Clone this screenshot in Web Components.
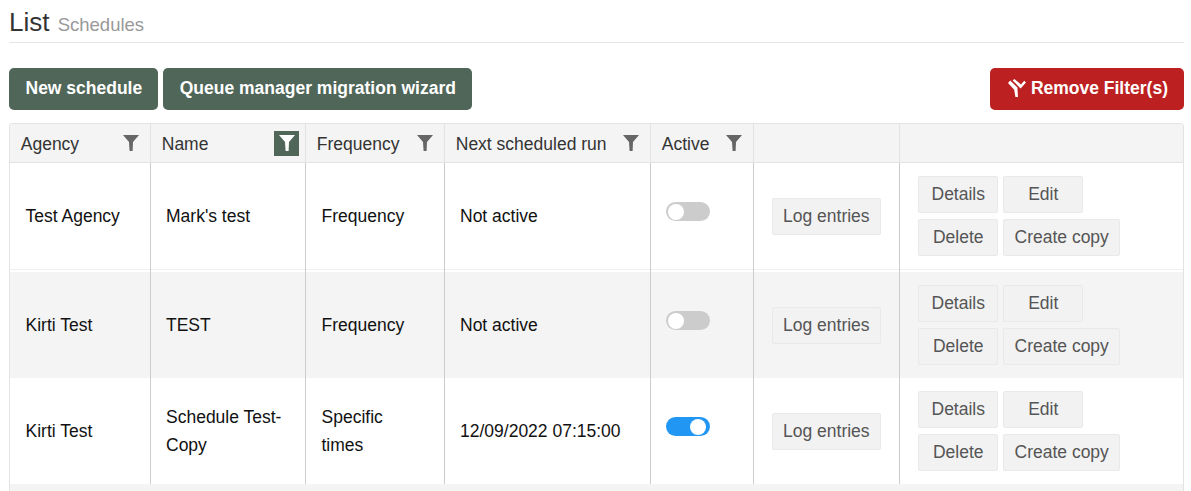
<!DOCTYPE html>
<html>
<head>
<meta charset="utf-8">
<title>Schedules</title>
<style>
  html, body { margin: 0; height: 491px; overflow: hidden; background: #fff; }
  body { font-family: "Liberation Sans", Arial, sans-serif; font-size: 16px; color: #333; }
</style>
</head>
<body>
<schedule-page></schedule-page>

<script>
const FILTER_PATH = 'M0 0H16L10 7 9.6 16H6.6L6 7Z';

class PageHeader extends HTMLElement {
  connectedCallback() {
    this.attachShadow({ mode: 'open' });
    this.shadowRoot.innerHTML = `
      <style>
        :host { display: block; border-bottom: 1px solid #e5e5e5; height: 42px; box-sizing: content-box; }
        .title { font-size: 26px; line-height: 44px; color: #333; }
        small { font-size: 18.5px; color: #999; margin-left: 1px; }
      </style>
      <div class="title"><slot></slot> <small><slot name="sub"></slot></small></div>
    `;
  }
}

class UiButton extends HTMLElement {
  connectedCallback() {
    this.attachShadow({ mode: 'open' });
    this.shadowRoot.innerHTML = `
      <style>
        :host { display: inline-flex; align-items: center; justify-content: center; box-sizing: border-box;
          height: 37px; padding: 0 10px 1px 10.5px; background: #f2f2f2; border: 1px solid #e9e9e9; border-radius: 2px;
          color: #555; font-size: 17.5px; white-space: nowrap; }
        :host([kind="primary"]), :host([kind="danger"]) { height: 42px; padding: 0 16px 2px 16.5px; border: 0; border-radius: 5px;
          color: #fff; font-weight: bold; }
        :host([kind="primary"]) { background: #4f6659; }
        :host([kind="danger"]) { background: #bd2020; padding-left: 18px; }
      </style>
      <slot></slot>
    `;
  }
}

class FilterIcon extends HTMLElement {
  connectedCallback() {
    this.attachShadow({ mode: 'open' });
    this.shadowRoot.innerHTML = `
      <style>
        :host { display: flex; align-items: center; justify-content: center; box-sizing: border-box; width: 25px; height: 25px; color: #666; padding-right: 1px; }
        :host([on]) { background: #4f6659; color: #fff; padding-right: 0; }
        svg { width: 16px; height: 16px; fill: currentColor; display: block; }
      </style>
      <svg viewBox="0 0 16 16"><path d="${FILTER_PATH}"/></svg>
    `;
  }
}

class UiToggle extends HTMLElement {
  connectedCallback() {
    this.attachShadow({ mode: 'open' });
    this.shadowRoot.innerHTML = `
      <style>
        :host { display: block; position: relative; width: 44px; height: 19px; border-radius: 10px; background: #ccc; }
        :host([on]) { background: #2196f3; }
        i { position: absolute; left: 2px; top: 1.5px; width: 16px; height: 16px; border-radius: 50%; background: #fff; }
        :host([on]) i { left: 24px; }
      </style>
      <i></i>
    `;
  }
}

class ScheduleRow extends HTMLElement {
  connectedCallback() {
    const on = this.hasAttribute('active');
    this.attachShadow({ mode: 'open' });
    this.shadowRoot.innerHTML = `
      <style>
        :host { display: grid; grid-template-columns: 141px 155px 139px 206px 103px 146px 1fr; height: 106px;
          color: #111; font-size: 17.5px; line-height: 28px; box-sizing: border-box; }
        :host([alt]) { background: #f4f4f4; }
        .c { display: flex; align-items: center; padding-left: 15px; padding-bottom: var(--pb, 0px); border-right: 1px solid #ccc; box-sizing: border-box; }
        .c:last-child { border-right: 0; }
        .l { padding-left: 15.5px; padding-right: 20px; }
        .n { padding-right: 10px; }
        .t { padding-bottom: calc(var(--pb, 0px) + 9px); }
        .g { padding-left: 18px; }
        .g ui-button { padding-left: 10px; }
        .acts { display: grid; grid-template-columns: 80px auto; justify-content: start; gap: 6px 5px; padding-left: 18px; align-content: center; }
        .acts ui-button { justify-self: stretch; }
        .acts .w { min-width: 80px; justify-self: start; }
      </style>
      <div class="c l"><slot name="agency"></slot></div>
      <div class="c n"><slot name="name"></slot></div>
      <div class="c l"><slot name="freq"></slot></div>
      <div class="c"><slot name="next"></slot></div>
      <div class="c t"><ui-toggle ${on ? 'on' : ''}></ui-toggle></div>
      <div class="c g"><ui-button>Log entries</ui-button></div>
      <div class="c acts">
        <ui-button>Details</ui-button><ui-button class="w">Edit</ui-button>
        <ui-button>Delete</ui-button><ui-button class="w">Create copy</ui-button>
      </div>
    `;
  }
}

class ScheduleHead extends HTMLElement {
  connectedCallback() {
    const cols = [['Agency', 0], ['Name', 1], ['Frequency', 0], ['Next scheduled run', 0], ['Active', 0]];
    this.attachShadow({ mode: 'open' });
    this.shadowRoot.innerHTML = `
      <style>
        :host { display: grid; grid-template-columns: 141px 155px 139px 206px 103px 146px 1fr; height: 39px; box-sizing: border-box;
          background: #f4f4f4; border-bottom: 1px solid #e3e3e3; color: #333; font-size: 17.5px; border-radius: 4px 4px 0 0; }
        .c { display: flex; align-items: center; justify-content: space-between; padding: 0 6px 0 10.75px; border-right: 1px solid #e3e3e3; box-sizing: border-box; }
        .c:last-child { border-right: 0; }
        .c span { padding-top: 2px; }
        .a { justify-content: flex-start; gap: 13px; }
      </style>
      ${cols.map(([label, on]) => `<div class="c${label === 'Active' ? ' a' : ''}"><span>${label}</span><filter-icon ${on ? 'on' : ''}></filter-icon></div>`).join('')}
      <div class="c"></div><div class="c"></div>
    `;
  }
}

class ScheduleTable extends HTMLElement {
  connectedCallback() {
    this.attachShadow({ mode: 'open' });
    this.shadowRoot.innerHTML = `
      <style>
        :host { display: block; border: 1px solid #e3e3e3; border-bottom: 0; border-radius: 4px 4px 0 0; margin-top: 13px; }
        .spacer { height: 8px; background: #f4f4f4; }
      </style>
      <schedule-head></schedule-head>
      <slot></slot>
      <div class="spacer"></div>
    `;
  }
}

class SchedulePage extends HTMLElement {
  connectedCallback() {
    this.attachShadow({ mode: 'open' });
    this.shadowRoot.innerHTML = `
      <style>
        :host { display: block; padding: 0 7px 0 9px; }
        .bar { display: flex; align-items: center; gap: 5px; margin-top: 25px; }
        .end { margin-left: auto; }
        svg { width: 18px; height: 18px; margin-right: 5px; flex: none; }
        .row1 { height: 109px; --pb: 3px; box-shadow: inset 0 -2px #fff, inset 0 -3px #f0f0f0; }
      </style>
      <page-header>List<span slot="sub">Schedules</span></page-header>
      <div class="bar">
        <ui-button kind="primary">New schedule</ui-button>
        <ui-button kind="primary">Queue manager migration wizard</ui-button>
        <ui-button kind="danger" class="end">
          <svg viewBox="0 0 18 18" fill="#fff"><path d="M0 4L2.2 1.5 9.4 8.5 10 18H7.4L6.2 10.8Z"/><path d="M4.6 1.6L6.4 0 13 5.4 16.2 1.8 18 3.6 12.6 9.4Z"/></svg><span>Remove Filter(s)</span>
        </ui-button>
      </div>
      <schedule-table>
        <schedule-row class="row1">
          <span slot="agency">Test Agency</span><span slot="name">Mark's test</span>
          <span slot="freq">Frequency</span><span slot="next">Not active</span>
        </schedule-row>
        <schedule-row alt>
          <span slot="agency">Kirti Test</span><span slot="name">TEST</span>
          <span slot="freq">Frequency</span><span slot="next">Not active</span>
        </schedule-row>
        <schedule-row active>
          <span slot="agency">Kirti Test</span><span slot="name">Schedule Test-Copy</span>
          <span slot="freq">Specific times</span><span slot="next">12/09/2022 07:15:00</span>
        </schedule-row>
      </schedule-table>
    `;
  }
}

customElements.define('page-header', PageHeader);
customElements.define('ui-button', UiButton);
customElements.define('filter-icon', FilterIcon);
customElements.define('ui-toggle', UiToggle);
customElements.define('schedule-row', ScheduleRow);
customElements.define('schedule-head', ScheduleHead);
customElements.define('schedule-table', ScheduleTable);
customElements.define('schedule-page', SchedulePage);
</script>
</body>
</html>
